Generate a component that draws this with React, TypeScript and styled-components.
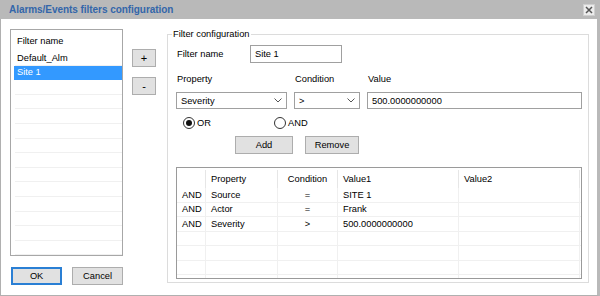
import React from "react";
import styled, { createGlobalStyle } from "styled-components";

const GlobalStyle = createGlobalStyle`
  html, body { margin: 0; padding: 0; background: #fff; }
  body { font-family: "Liberation Sans", Arial, sans-serif; font-size: 9.3px; color: #000; }
  * { box-sizing: border-box; }
`;

const Window = styled.div`
  width: 600px;
  height: 296px;
  display: flex;
  flex-direction: column;
  background: #fff;
  overflow: hidden;
`;

const TitleBar = styled.div`
  height: 19px;
  flex: none;
  background: #b9b9b9;
  display: flex;
  align-items: center;
  justify-content: space-between;
  padding: 0 5px 0 9px;
`;

const Title = styled.div`
  font-weight: bold;
  font-size: 10px;
  color: #3366aa;
  letter-spacing: -0.05px;
`;

const CloseBox = styled.div`
  width: 12px;
  height: 12px;
  background: #ececec;
  border: 1px solid #cfcfcf;
  display: flex;
  align-items: center;
  justify-content: center;
  margin-top: 1px;
`;

const Body = styled.div`
  flex: 1;
  display: flex;
  align-items: flex-start;
  border-left: 1px solid #b0b0b0;
  border-right: 3px solid #b9b9b9;
  border-bottom: 1px solid #b0b0b0;
  padding: 10px 0 0 9px;
`;

const LeftCol = styled.div`
  width: 113px;
  display: flex;
  flex-direction: column;
`;

const ListBox = styled.div`
  height: 227px;
  border: 1px solid #a7a7a7;
  background: #fff;
  overflow: hidden;
`;

const ListHeader = styled.div`
  height: 21px;
  display: flex;
  align-items: center;
  padding-left: 6px;
  padding-top: 1px;
`;

const ListRow = styled.div<{ $selected?: boolean }>`
  height: 14.6px;
  display: flex;
  align-items: center;
  margin-left: ${(p) => (p.$selected ? "3px" : "4px")};
  border-bottom: 1px solid ${(p) => (p.$selected ? "#3399ff" : "#f0f0f0")};
  background: ${(p) => (p.$selected ? "#3399ff" : "transparent")};
  color: ${(p) => (p.$selected ? "#fff" : "#000")};
  padding-left: ${(p) => (p.$selected ? "3px" : "2px")};
`;

const DialogButtons = styled.div`
  display: flex;
  gap: 10px;
  margin-top: 11px;
  padding-left: 1px;
`;

const Button = styled.button<{ $w: number; $focused?: boolean; $big?: boolean }>`
  width: ${(p) => p.$w}px;
  height: 18px;
  padding: 0;
  font-family: inherit;
  font-size: ${(p) => (p.$big ? "11px" : "9.3px")};
  color: #000;
  background: #e1e1e1;
  border: ${(p) => (p.$focused ? "2px solid #2a7fd4" : "1px solid #adadad")};
  display: flex;
  align-items: center;
  justify-content: center;
`;

const MidCol = styled.div`
  margin-left: 9px;
  padding-top: 20px;
  display: flex;
  flex-direction: column;
  gap: 10px;
`;

const Group = styled.div`
  position: relative;
  margin-left: 11px;
  margin-top: 5px;
  width: 422px;
  height: 249px;
  border: 1px solid #dcdcdc;
  display: flex;
  flex-direction: column;
`;

const Legend = styled.div`
  position: absolute;
  left: 4px;
  top: -7px;
  padding: 0 2px 0 1px;
  background: #fff;
  line-height: 12px;
`;

const NameRow = styled.div`
  display: flex;
  align-items: center;
  margin-top: 10px;
  padding-left: 9px;
`;

const NameLabel = styled.div`
  width: 73px;
`;

const TextBox = styled.div<{ $w?: number; $h?: number }>`
  width: ${(p) => (p.$w ? `${p.$w}px` : "auto")};
  height: ${(p) => p.$h ?? 18}px;
  border: 1px solid #a0a0a0;
  background: #fff;
  display: flex;
  align-items: center;
  padding-left: 4px;
`;

const FieldGrid = styled.div`
  display: grid;
  grid-template-columns: 111px 66px 215px;
  column-gap: 7px;
  padding-left: 8px;
  margin-top: 10px;
`;

const FieldLabel = styled.div`
  height: 12px;
  line-height: 12px;
  padding-left: 1px;
  margin-bottom: 7px;
`;

const SelectBox = styled.div`
  height: 17px;
  border: 1px solid #a0a0a0;
  background: #fff;
  display: flex;
  align-items: center;
  justify-content: space-between;
  padding: 0 4px 0 4px;
`;

const RadioRow = styled.div`
  display: flex;
  margin-top: 8px;
  padding-left: 15px;
  height: 12px;
`;

const RadioItem = styled.div<{ $w?: number }>`
  display: flex;
  align-items: center;
  gap: 2px;
  width: ${(p) => (p.$w ? `${p.$w}px` : "auto")};
`;

const RadioCircle = styled.div<{ $on?: boolean }>`
  width: 12px;
  height: 12px;
  border-radius: 50%;
  border: 1px solid #333;
  background: #fff;
  display: flex;
  align-items: center;
  justify-content: center;
  &::after {
    content: "";
    display: ${(p) => (p.$on ? "block" : "none")};
    width: 6px;
    height: 6px;
    border-radius: 50%;
    background: #111;
  }
`;

const ActionRow = styled.div`
  display: flex;
  gap: 12px;
  margin-top: 7px;
  padding-left: 67px;
`;

const Table = styled.div`
  margin: 13px 0 0 8px;
  width: 406px;
  height: 112px;
  border: 1px solid #9a9a9a;
  overflow: hidden;
  background: #fff;
`;

const cols = "29px 72px 60px 121px 121px";

const HeaderRow = styled.div`
  display: grid;
  grid-template-columns: ${cols};
  height: 20px;
`;

const HeaderCell = styled.div<{ $center?: boolean }>`
  display: flex;
  align-items: center;
  justify-content: ${(p) => (p.$center ? "center" : "flex-start")};
  padding-left: ${(p) => (p.$center ? "0" : "5px")};
  border-right: 1px solid #e6e6e6;
  margin-top: 2px;
`;

const DataRow = styled.div`
  display: grid;
  grid-template-columns: ${cols};
  height: 14.5px;
  border-bottom: 1px solid #f0f0f0;
`;

const Cell = styled.div<{ $center?: boolean }>`
  display: flex;
  align-items: center;
  justify-content: ${(p) => (p.$center ? "center" : "flex-start")};
  padding-left: ${(p) => (p.$center ? "0" : "5px")};
  border-right: 1px solid #f0f0f0;
  white-space: nowrap;
  overflow: hidden;
`;

const Chevron = () => (
  <svg width="8" height="5" viewBox="0 0 8 5">
    <path d="M0.5 0.5 L4 4 L7.5 0.5" fill="none" stroke="#555" strokeWidth="1" />
  </svg>
);

const CloseIcon = () => (
  <svg width="8" height="8" viewBox="0 0 8 8">
    <path d="M1 1 L7 7 M7 1 L1 7" stroke="#555" strokeWidth="1.5" />
  </svg>
);

const rows = [
  ["AND", "Source", "=", "SITE 1", ""],
  ["AND", "Actor", "=", "Frank", ""],
  ["AND", "Severity", ">", "500.0000000000", ""],
  ["", "", "", "", ""],
  ["", "", "", "", ""],
  ["", "", "", "", ""],
  ["", "", "", "", ""],
];

export default function App() {
  return (
    <>
      <GlobalStyle />
      <Window>
        <TitleBar>
          <Title>Alarms/Events filters configuration</Title>
          <CloseBox>
            <CloseIcon />
          </CloseBox>
        </TitleBar>
        <Body>
          <LeftCol>
            <ListBox>
              <ListHeader>Filter name</ListHeader>
              <ListRow>Default_Alm</ListRow>
              <ListRow $selected>Site 1</ListRow>
              {Array.from({ length: 12 }).map((_, i) => (
                <ListRow key={i} />
              ))}
            </ListBox>
            <DialogButtons>
              <Button $w={62} $focused>OK</Button>
              <Button $w={62}>Cancel</Button>
            </DialogButtons>
          </LeftCol>
          <MidCol>
            <Button $w={24} $big>+</Button>
            <Button $w={24} $big>-</Button>
          </MidCol>
          <Group>
            <Legend>Filter configuration</Legend>
            <NameRow>
              <NameLabel>Filter name</NameLabel>
              <TextBox $w={92}>Site 1</TextBox>
            </NameRow>
            <FieldGrid>
              <FieldLabel>Property</FieldLabel>
              <FieldLabel>Condition</FieldLabel>
              <FieldLabel>Value</FieldLabel>
              <SelectBox>
                <span>Severity</span>
                <Chevron />
              </SelectBox>
              <SelectBox>
                <span>&gt;</span>
                <Chevron />
              </SelectBox>
              <TextBox $h={17}>500.0000000000</TextBox>
            </FieldGrid>
            <RadioRow>
              <RadioItem $w={91}>
                <RadioCircle $on />
                <span>OR</span>
              </RadioItem>
              <RadioItem>
                <RadioCircle />
                <span>AND</span>
              </RadioItem>
            </RadioRow>
            <ActionRow>
              <Button $w={58}>Add</Button>
              <Button $w={54}>Remove</Button>
            </ActionRow>
            <Table>
              <HeaderRow>
                <HeaderCell />
                <HeaderCell>Property</HeaderCell>
                <HeaderCell $center>Condition</HeaderCell>
                <HeaderCell>Value1</HeaderCell>
                <HeaderCell>Value2</HeaderCell>
              </HeaderRow>
              {rows.map((r, i) => (
                <DataRow key={i}>
                  <Cell>{r[0]}</Cell>
                  <Cell>{r[1]}</Cell>
                  <Cell $center>{r[2]}</Cell>
                  <Cell>{r[3]}</Cell>
                  <Cell>{r[4]}</Cell>
                </DataRow>
              ))}
            </Table>
          </Group>
        </Body>
      </Window>
    </>
  );
}
